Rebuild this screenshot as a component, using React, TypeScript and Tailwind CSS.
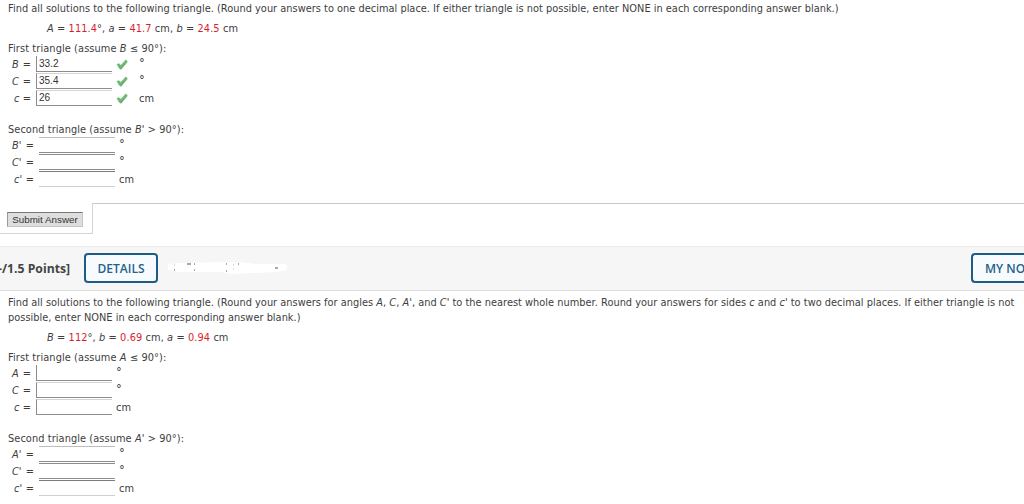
import clsx from "clsx";

interface AnswerRowProps {
  label: string;
  unit: string;
  value?: string;
  prime?: boolean;
  borders: string;
}

function CheckMark() {
  return (
    <svg viewBox="0 0 13 12" className="mt-[3px] ml-1 h-3 w-[13px] flex-none">
      <path d="M.8 5.6 2.8 4.4l2 1.8L9.8.8l1.6 1.4-.4 1.2L5.2 10.4 3.6 9.8z" fill="#5aa95e" stroke="#a3d3a3" strokeWidth=".6" />
      <path d="M2.2 6 4.8 8l5.6-5.8" fill="none" stroke="#86c787" strokeWidth="1" />
    </svg>
  );
}

function AnswerRow({ label, unit, value, prime, borders }: AnswerRowProps) {
  return (
    <div className="flex h-[17px] items-center">
      <div className={clsx("flex flex-none justify-between pt-px pr-[5px] pl-1 leading-[17px]", prime ? "w-[31px]" : "w-7")}>
        <i className={label.startsWith("c") ? "pl-[2px]" : ""}>{label}</i>
        <span>=</span>
      </div>
      <input
        defaultValue={value}
        aria-label={label}
        className={clsx(
          "h-4 w-[76px] flex-none bg-white pl-[2px] font-['Liberation_Sans',sans-serif] text-[10px] leading-[14px] tracking-normal text-[#333] outline-none",
          borders
        )}
      />
      {value && <CheckMark />}
      <span className={clsx("leading-[17px]", value ? "ml-[10px]" : "ml-1", unit === "cm" ? "pt-px" : "text-[11.5px]")}>
        {unit}
      </span>
    </div>
  );
}

function Red({ children }: { children: React.ReactNode }) {
  return <span className="text-[#d81e2c]">{children}</span>;
}

// input outlines: the first row of each group shows no top edge
const openTop = "border-b border-l border-[#8c8c8c]";
const boxed = "border-b border-l border-t border-[#8c8c8c] border-t-[#d5d5d5]";
const ruled = "border-y border-t-[#bdbdbd] border-b-[#8c8c8c]";
const ruledDark = "border-y border-[#8c8c8c]";
const ruledLast = "border-y border-t-[#7c7c7c] border-b-[#cfcfcf]";

export default function App() {
  return (
    <div className="h-[504px] w-[1024px] overflow-hidden bg-white font-['DejaVu_Sans',sans-serif] text-[9.8px] tracking-[0.02px] whitespace-nowrap text-[#3d3d3d]">
      <section className="h-[203px] pl-2">
        <p className="h-[18px] leading-[18px]">
          Find all solutions to the following triangle. (Round your answers to one decimal place. If either triangle is not
          possible, enter NONE in each corresponding answer blank.)
        </p>
        <p className="h-[21px] pl-[39px] leading-[21px] tracking-[0.1px]">
          <i>A</i> = <Red>111.4</Red>°, <i>a</i> = <Red>41.7</Red> cm, <i>b</i> = <Red>24.5</Red> cm
        </p>
        <p className="h-4 leading-[20px] tracking-[0.1px]">
          First triangle (assume <i>B</i> ≤ 90°):
        </p>
        <div className="h-[65px]">
          <AnswerRow label="B" value="33.2" unit="°" borders={openTop} />
          <AnswerRow label="C" value="35.4" unit="°" borders={boxed} />
          <AnswerRow label="c" value="26" unit="cm" borders={boxed} />
        </div>
        <p className="h-4 leading-[20px] tracking-[0.08px]">
          Second triangle (assume <i>B'</i> &gt; 90°):
        </p>
        <AnswerRow prime label="B'" unit="°" borders={ruled} />
        <AnswerRow prime label="C'" unit="°" borders={ruledDark} />
        <AnswerRow prime label="c'" unit="cm" borders={ruledLast} />
      </section>

      <div className="flex h-[43px]">
        <div className="h-[31px] w-[93px] border-r border-b border-[#d4d4d4] pt-[9px] pl-[7px]">
          <button className="block h-[15px] w-[76px] border border-[#c4c4c4] border-t-[#777] border-l-[#999] bg-[#dedede] font-['Liberation_Sans',sans-serif] text-[9.8px] leading-[13px] text-[#333]">
            Submit Answer
          </button>
        </div>
        <div className="h-px flex-1 bg-[#c8c8c8]" />
      </div>

      <div className="flex h-[45px] items-start border-t border-b border-t-[#ececec] border-b-[#dcdcdc] bg-[#f6f6f6] pt-[6px] font-['Open_Sans',sans-serif]">
        <span className="-ml-[2px] w-[86px] text-[12.2px] leading-[31px] font-bold text-[#444]">-/1.5 Points]</span>
        <button className="h-[30px] w-[74px] flex-none rounded-[4px] border-2 border-[#1f5c85] bg-[#f7fbfd] pt-px text-[12px] font-semibold text-[#25618b]">
          DETAILS
        </button>
        <svg viewBox="0 0 120 16" className="mt-[7px] ml-[10px] h-4 w-[120px]">
          <path d="M0 4 14 3 56 2 70 2 88 4 116 4 119 5 119 10 108 12 88 13 62 14 54 12 12 12 0 10z" fill="#fff" />
          <path d="M6 10h1M19 4h4M26 4h1M26 10h1M58 4h1M58 11h1M70 4h1M107 8h3" stroke="#555" strokeWidth="1" />
          <path d="M6 5h1M65 5h1M65 9h1" stroke="#bbb" strokeWidth="1" />
        </svg>
        <button className="ml-auto h-[30px] w-[53px] flex-none rounded-l-[4px] border-2 border-r-0 border-[#1f5c85] bg-[#f7fbfd] pt-px pl-3 text-left text-[12px] font-semibold text-[#25618b]">
          MY NO
        </button>
      </div>

      <section className="pt-1 pl-2">
        <p className="h-[15px] leading-[15px]">
          Find all solutions to the following triangle. (Round your answers for angles <i>A</i>, <i>C</i>, <i>A'</i>, and{" "}
          <i>C'</i> to the nearest whole number. Round your answers for sides <i>c</i> and <i>c'</i> to two decimal places.
          If either triangle is not
        </p>
        <p className="h-[17px] leading-[15px]">possible, enter NONE in each corresponding answer blank.)</p>
        <p className="h-[21px] pl-[39px] leading-[21px] tracking-[0.1px]">
          <i>B</i> = <Red>112</Red>°, <i>b</i> = <Red>0.69</Red> cm, <i>a</i> = <Red>0.94</Red> cm
        </p>
        <p className="h-4 leading-[20px] tracking-[0.1px]">
          First triangle (assume <i>A</i> ≤ 90°):
        </p>
        <div className="h-[65px]">
          <AnswerRow label="A" unit="°" borders={openTop} />
          <AnswerRow label="C" unit="°" borders={boxed} />
          <AnswerRow label="c" unit="cm" borders={boxed} />
        </div>
        <p className="h-4 leading-[20px] tracking-[0.08px]">
          Second triangle (assume <i>A'</i> &gt; 90°):
        </p>
        <AnswerRow prime label="A'" unit="°" borders={ruled} />
        <AnswerRow prime label="C'" unit="°" borders={ruledDark} />
        <AnswerRow prime label="c'" unit="cm" borders={ruledLast} />
      </section>
    </div>
  );
}
